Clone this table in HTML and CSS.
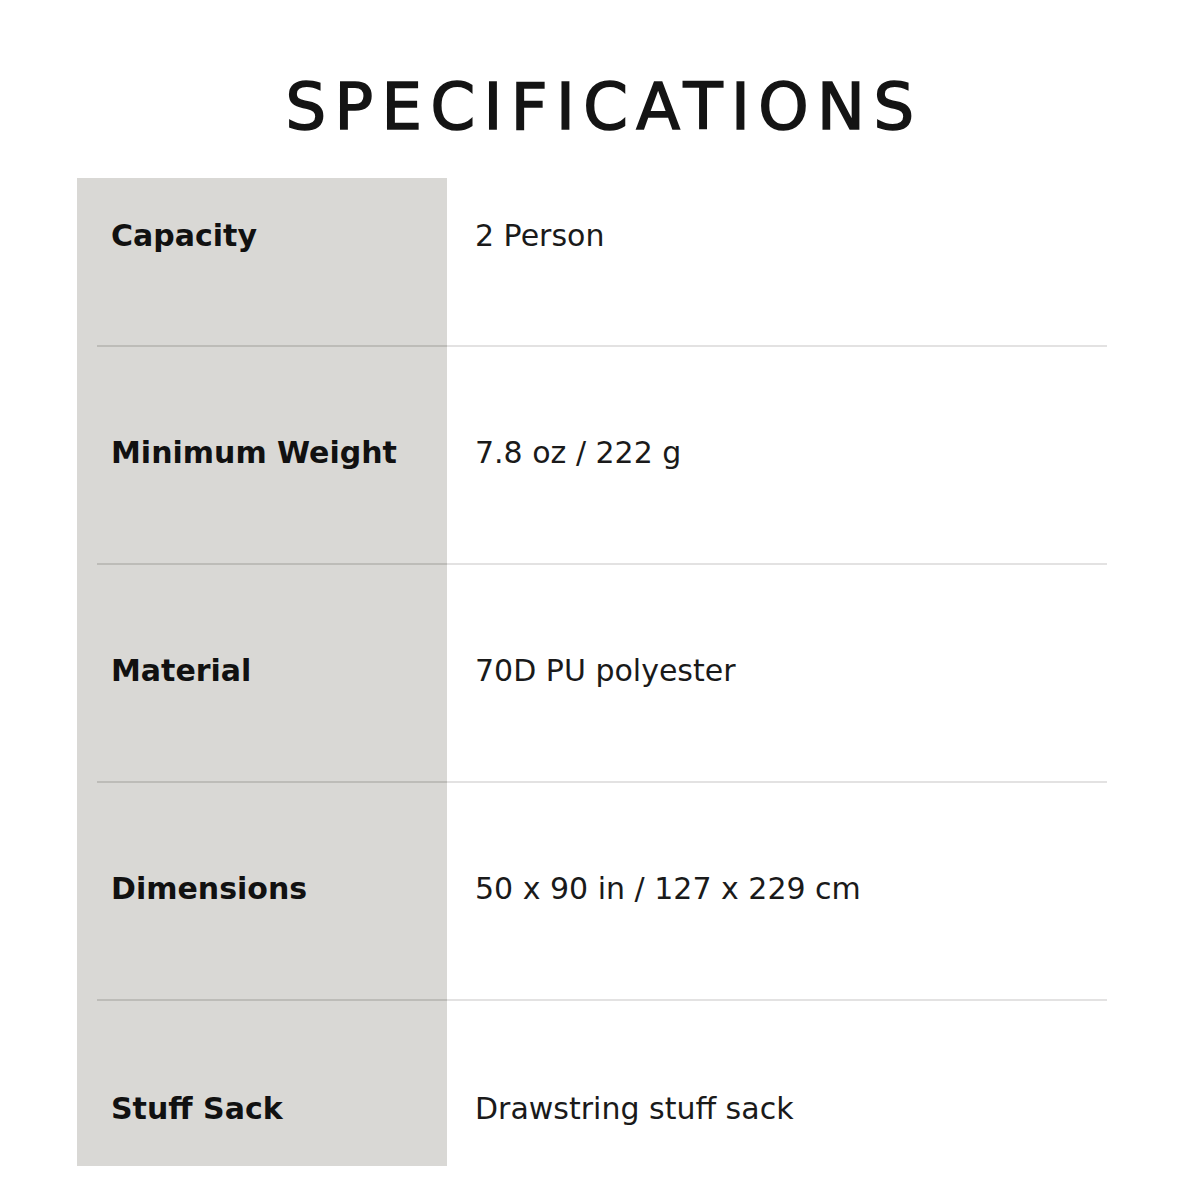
FILE: index.html
```html
<!DOCTYPE html>
<html>
<head>
<meta charset="utf-8">
<link rel="stylesheet" href="styles.css">
</head>
<body>
<div class="page">
  <h1 class="title">SPECIFICATIONS</h1>
  <div class="table">
    <div class="row first">
      <div class="label">Capacity</div>
      <div class="value">2 Person</div>
    </div>
    <div class="row">
      <div class="label">Minimum Weight</div>
      <div class="value">7.8 oz / 222 g</div>
    </div>
    <div class="row">
      <div class="label">Material</div>
      <div class="value">70D PU polyester</div>
    </div>
    <div class="row">
      <div class="label">Dimensions</div>
      <div class="value">50 x 90 in / 127 x 229 cm</div>
    </div>
    <div class="row last">
      <div class="label">Stuff Sack</div>
      <div class="value">Drawstring stuff sack</div>
    </div>
  </div>
</div>
</body>
</html>
```

FILE: styles.css
```css
html, body {
  margin: 0;
  padding: 0;
  background: #ffffff;
}
.page {
  width: 1200px;
  height: 1200px;
  box-sizing: border-box;
  padding-top: 76px;
  color: #111111;
  font-family: "DejaVu Sans", "Liberation Sans", sans-serif;
}
.title {
  margin: 0;
  padding-left: 8px;
  text-align: center;
  font-family: "DejaVu Sans", sans-serif;
  font-weight: 400;
  font-size: 64px;
  line-height: 62px;
  letter-spacing: 8.4px;
  color: #141414;
  -webkit-text-stroke: 1.6px #141414;
}
.table {
  margin-top: 40px;
  margin-left: 77px;
  width: 1030px;
  background: linear-gradient(to right, #d9d8d5 0, #d9d8d5 370px, #ffffff 370px);
}
.row {
  display: flex;
  align-items: flex-start;
  height: 218px;
  box-sizing: border-box;
  padding-top: 86px;
  margin-left: 20px;
  border-bottom: 2px solid #e3e2e2;
  position: relative;
}
.row::after {
  content: "";
  position: absolute;
  left: 0;
  bottom: -2px;
  width: 350px;
  height: 2px;
  background: #bdbcb8;
}
.row.first {
  height: 169px;
  padding-top: 38px;
}
.row.last {
  height: 165px;
  padding-top: 88px;
  border-bottom: none;
}
.row.last::after {
  display: none;
}
.label {
  width: 378px;
  padding-left: 14px;
  box-sizing: border-box;
  font-weight: 700;
  font-size: 30px;
  line-height: 40px;
  color: #111;
}
.value {
  font-weight: 400;
  font-size: 30px;
  line-height: 40px;
  color: #1a1a1a;
}
```
